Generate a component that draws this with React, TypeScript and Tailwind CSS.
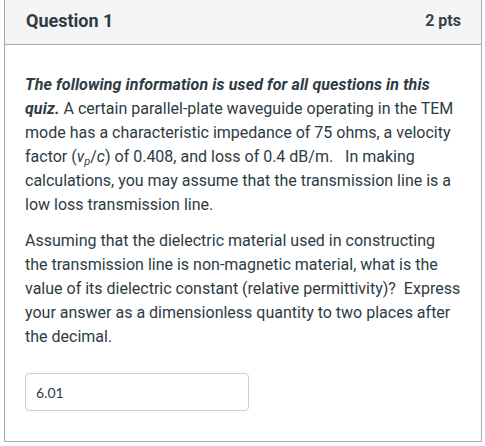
import React from "react";

export default function App() {
  return (
    <div className="w-[485px] h-[446px] bg-white" style={{ fontFamily: "Roboto, 'Liberation Sans', sans-serif" }}>
      <div className="ml-[4px] w-[478px] border-x border-b border-[#a8a8a8] text-[#2d3b45]">
        <div className="h-[45px] bg-[#f5f5f5] border-b border-[#a8a8a8] flex items-center justify-between pl-[21px] pr-[20px] pb-[2px]">
          <span className="text-[18px] font-bold leading-none">Question 1</span>
          <span className="text-[16px] font-bold leading-none text-[#3a434a]">2 pts</span>
        </div>
        <div className="px-[20px] pt-[28px] pb-[30px]">
          <p className="text-[16px] leading-[24px]">
            <strong className="italic tracking-[0.12px]">The following information is used for all questions in this quiz.</strong> A certain parallel-plate waveguide operating in the TEM mode has a characteristic impedance of 75 ohms, a velocity factor (<em>v<sub className="text-[11px] leading-none">p</sub></em>/<em>c</em>) of 0.408, and loss of 0.4 dB/m.&nbsp;&nbsp; In making calculations, you may assume that the transmission line is a low loss transmission line.
          </p>
          <p className="text-[16px] leading-[24px] mt-[12px]">
            Assuming that the dielectric material used in constructing the transmission line is non-magnetic material, what is the value of its dielectric constant (relative permittivity)?&nbsp; Express your answer as a dimensionless quantity to two places after the decimal.
          </p>
          <div className="mt-[24px] w-[224px] h-[38px] border border-[#c7cdd1] rounded-[4px] flex items-center pl-[10px] text-[14px] text-[#2d3b45]" style={{ fontFamily: "Lato, 'Liberation Sans', sans-serif" }}>
            6.01
          </div>
        </div>
      </div>
    </div>
  );
}
